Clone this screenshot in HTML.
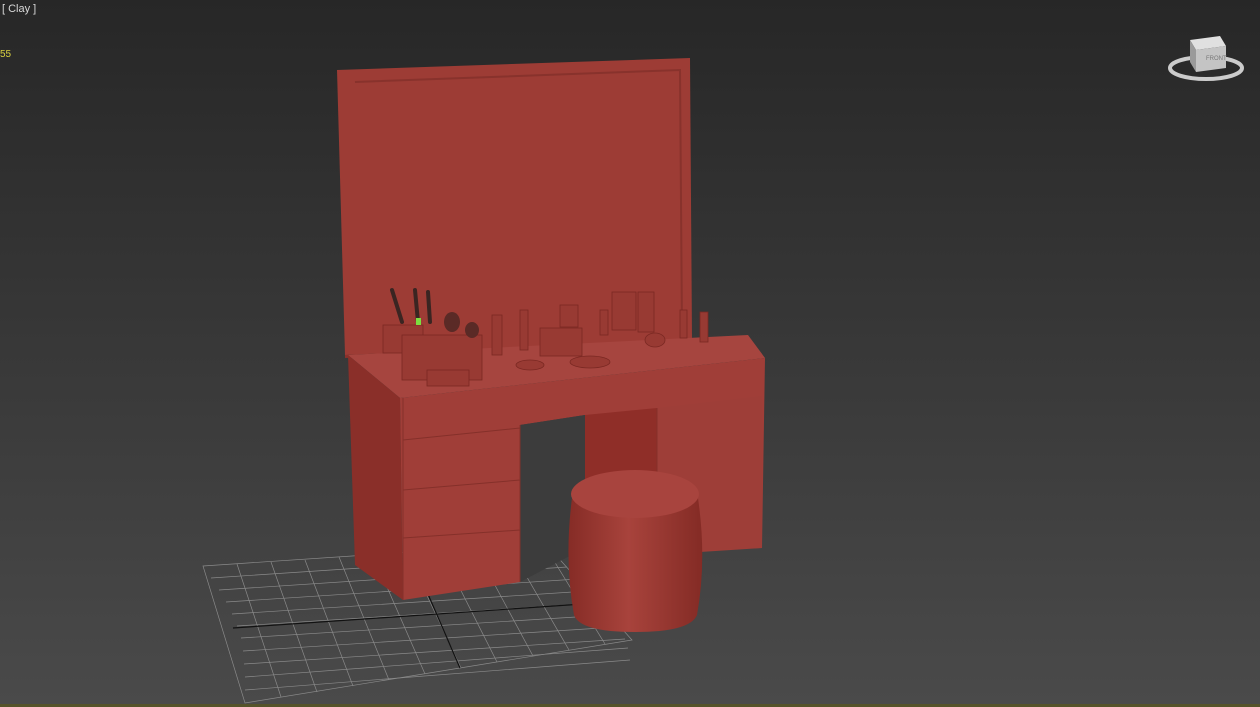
<!DOCTYPE html><html><head><style>html,body{margin:0;padding:0;}body{width:1260px;height:707px;overflow:hidden;background:linear-gradient(#272727,#3a3a3a 55%,#4a4a4a);position:relative;font-family:"Liberation Sans",sans-serif}
.t{position:absolute;font-size:11px;color:#d8d8d8}</style></head><body>
<div class="t" style="left:2px;top:3px">[ Clay ]</div>
<div class="t" style="left:0;top:49px;color:#d8d040;font-size:10px">55</div>
<svg width="1260" height="707" style="position:absolute;left:0;top:0">
<defs><linearGradient id="st" x1="0" x2="1"><stop offset="0" stop-color="#862c26"/><stop offset=".45" stop-color="#a8433c"/><stop offset="1" stop-color="#842b25"/></linearGradient></defs>
<g stroke="#8a8a8a" stroke-width="0.7" fill="none">
<polygon points="203,566 545,543 632,640 245,703"/>
<path d="M237,564 L281,697 M271,562 L317,692 M305,560 L353,686 M339,557 L389,680 M373,555 L425,674 M407,553 L461,668 M441,551 L497,662 M475,548 L533,656 M509,546 L569,650 M543,543 L605,644"/>
<path d="M211,578 L557,555 M219,590 L567,567 M226,602 L578,579 M232,614 L588,591 M237,626 L598,603 M241,638 L608,615 M243,651 L617,627 M244,664 L625,639 M245,677 L628,648 M245,690 L630,660"/>
</g>
<path d="M233,628 L612,602 M411,555 L460,668" stroke="#111" stroke-width="1.2"/>
<polygon points="337,70 690,58 692,340 345,355" fill="#9d3c35"/>
<polygon points="345,355 692,340 692,343 345,358" fill="#8a312b"/>
<polyline points="355,82 680,70 682,332" fill="none" stroke="#88322c" stroke-width="2"/>
<polygon points="348,355 748,335 765,358 400,398" fill="#a6453f"/>
<polygon points="348,355 400,398 403,600 355,565" fill="#8a2f29"/>
<polygon points="400,398 765,358 762,548 700,552 700,420 657,425 657,545 585,548 585,415 520,425 520,582 403,600" fill="#a03e38"/>
<polygon points="520,425 585,415 585,548 520,582" fill="#3c3c3c"/>
<polygon points="585,415 657,408 657,548 585,550" fill="#8f2e28"/>
<polygon points="657,408 762,396 762,548 657,552" fill="#9e3e38"/>
<g stroke="#85302a" stroke-width="1" fill="none"><path d="M403,440 L520,428 M403,490 L520,480 M403,538 L520,530 M520,425 L520,582 M657,408 L657,552 M403,398 L403,600"/></g>
<g fill="#983a33" stroke="#7a2822" stroke-width="0.8">
<rect x="383" y="325" width="40" height="28"/><rect x="402" y="335" width="80" height="45"/><rect x="427" y="370" width="42" height="16"/>
<rect x="540" y="328" width="42" height="28"/><rect x="612" y="292" width="24" height="38"/><rect x="638" y="292" width="16" height="40"/>
<rect x="560" y="305" width="18" height="22"/><rect x="492" y="315" width="10" height="40"/><rect x="520" y="310" width="8" height="40"/><rect x="600" y="310" width="8" height="25"/><rect x="700" y="312" width="8" height="30"/><rect x="680" y="310" width="7" height="28"/>
<ellipse cx="655" cy="340" rx="10" ry="7"/><ellipse cx="530" cy="365" rx="14" ry="5"/><ellipse cx="590" cy="362" rx="20" ry="6"/>
</g>
<g stroke="#3a2522" stroke-width="4" stroke-linecap="round"><path d="M392,290 L402,322 M415,290 L418,322 M428,292 L430,322"/></g>
<ellipse cx="452" cy="322" rx="8" ry="10" fill="#5a2a26"/><ellipse cx="472" cy="330" rx="7" ry="8" fill="#5a2a26"/>
<rect x="416" y="318" width="5" height="7" fill="#7ce040"/>
<path d="M572,498 Q564,560 574,615 Q580,632 635,632 Q690,632 697,615 Q707,560 698,498Z" fill="url(#st)"/>
<ellipse cx="635" cy="494" rx="64" ry="24" fill="#a8443e"/>
<g transform="translate(1206,60)">
<ellipse cx="0" cy="8" rx="36" ry="11" fill="none" stroke="#ccc" stroke-width="4"/>
<polygon points="-16,-20 14,-24 20,-14 -10,-10" fill="#e0e0e0"/>
<polygon points="-16,-20 -10,-10 -10,12 -16,2" fill="#9a9a9a"/>
<polygon points="-10,-10 20,-14 20,8 -10,12" fill="#c4c4c4"/>
<text x="0" y="0" font-size="6" fill="#777">FRONT</text>
</g>
<rect x="0" y="704" width="1260" height="3" fill="#55532a"/>
</svg>
</body></html>
